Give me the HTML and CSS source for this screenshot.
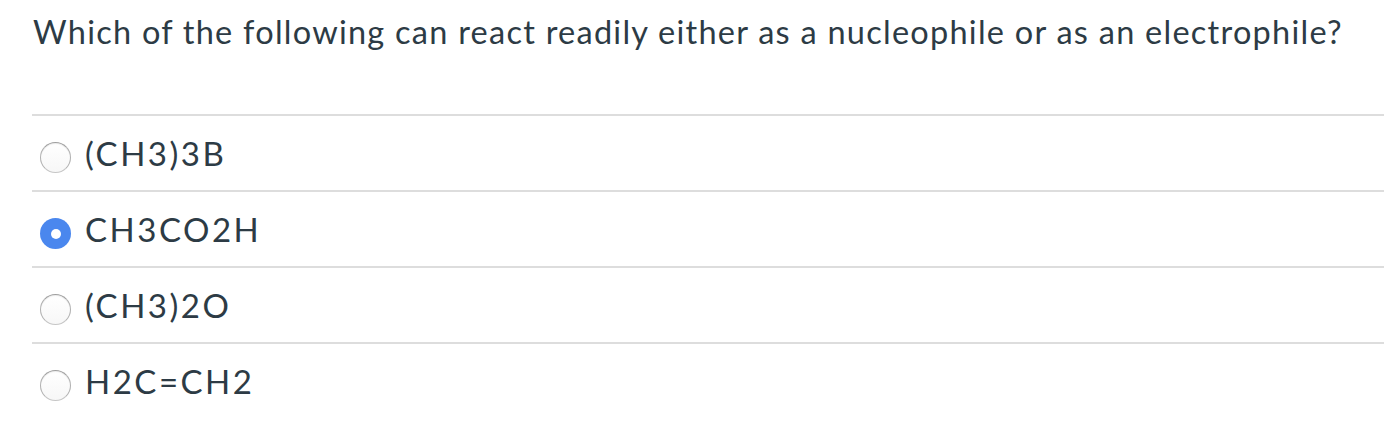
FILE: index.html
```html
<!DOCTYPE html>
<html lang="en">
<head>
<meta charset="utf-8">
<title>Question</title>
<link rel="stylesheet" href="styles.css">
</head>
<body>
<div class="question">
  <p class="question-text">Which of the following can react readily either as a nucleophile or as an electrophile?</p>
  <div class="answers">
    <label class="answer"><input type="radio" name="q1" class="radio"><span class="answer-text">(CH3)3B</span></label>
    <label class="answer"><input type="radio" name="q1" class="radio" checked><span class="answer-text">CH3CO2H</span></label>
    <label class="answer"><input type="radio" name="q1" class="radio"><span class="answer-text">(CH3)2O</span></label>
    <label class="answer"><input type="radio" name="q1" class="radio"><span class="answer-text">H2C=CH2</span></label>
  </div>
</div>
</body>
</html>
```

FILE: styles.css
```css
html, body {
  margin: 0;
  padding: 0;
  background: #ffffff;
}

body {
  font-family: Lato, "Open Sans", "Liberation Sans", sans-serif;
  color: #2d3b45;
}

.question {
  padding: 8px 0 0 32px;
}

.question-text {
  margin: 0 0 58px 1px;
  font-size: 32.5px;
  line-height: 48px;
  font-weight: 400;
  letter-spacing: 1.25px;
}

.answers {
  display: flex;
  flex-direction: column;
}

.answer {
  display: flex;
  align-items: flex-start;
  gap: 14px;
  border-top: 2px solid #dddddd;
  padding: 19px 0 19px 8px;
  height: 36px;
}

.answer-text {
  font-size: 33px;
  line-height: 36px;
  letter-spacing: 2.5px;
}

.radio {
  appearance: none;
  -webkit-appearance: none;
  margin: 7px 0 0 0;
  width: 31px;
  height: 31px;
  border-radius: 50%;
  box-sizing: border-box;
  border: 1.5px solid #b0b0b0;
  border-top-color: #9f9f9f;
  border-bottom-color: #c6c6c6;
  background: linear-gradient(#ffffff, #f7f7f7);
  box-shadow: inset 0 1px 1px rgba(0, 0, 0, 0.08);
  flex: none;
  position: relative;
}

.radio:checked {
  border: none;
  background: #4a87ee;
  box-shadow: none;
}

.radio:checked::after {
  content: "";
  position: absolute;
  left: 50%;
  top: 50%;
  width: 10px;
  height: 10px;
  margin: -5px 0 0 -5px;
  border-radius: 50%;
  background: #ffffff;
}
```
